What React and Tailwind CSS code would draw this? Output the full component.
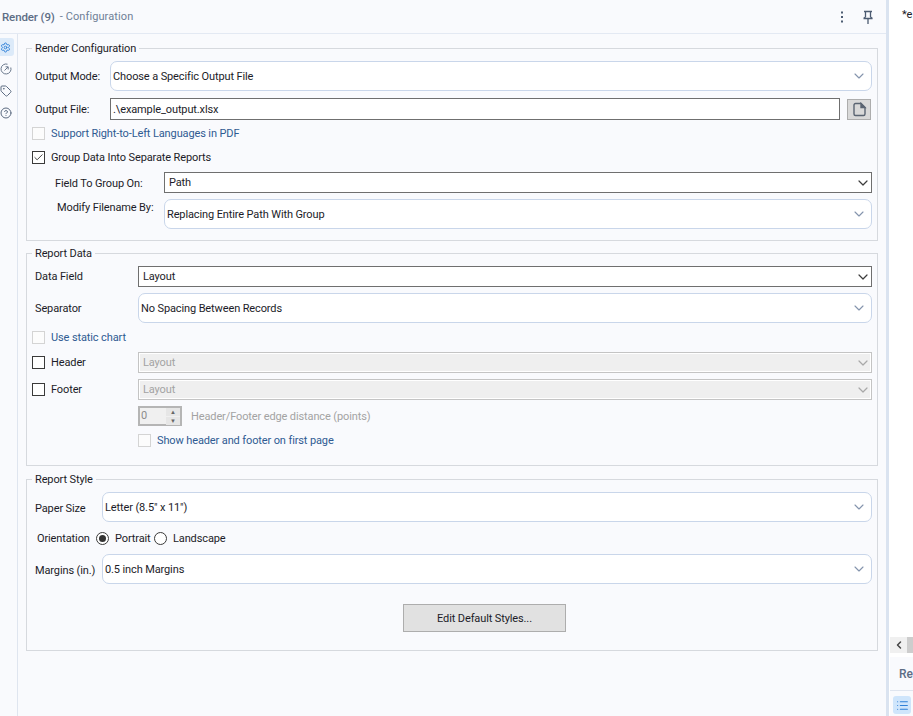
import { ChevronDown, ChevronLeft, Settings, Tag, CircleHelp, List, Check } from 'lucide-react'

const font = { fontFamily: '"Roboto", "Liberation Sans", sans-serif' }

// Roboto sits a little high next to the original font, so labels get a taller line box
const label = 'h-[16px] leading-[18px] text-[#1c1c28] whitespace-nowrap'
const lowLabel = 'h-[16px] leading-[20px] text-[#1c1c28] whitespace-nowrap'

function RoundSelect({ value }) {
  return (
    <div className="h-[30px] flex-1 flex items-center justify-between bg-white border border-[#c9d6ea] rounded-[7px] pl-[2px] pr-[4px] text-[#1c1c28]">
      <span className="h-[16px] leading-[18px]">{value}</span>
      <ChevronDown size={16} strokeWidth={1.7} className="text-[#8494ad]" />
    </div>
  )
}

function BoxSelect({ value }) {
  return (
    <div className="h-[21px] flex-1 flex items-center justify-between bg-white border border-[#6f6f6f] pl-1 text-[#1c1c28]">
      <span>{value}</span>
      <ChevronDown size={16} strokeWidth={1.8} className="text-[#3c3c3c]" />
    </div>
  )
}

function DisabledSelect({ value }) {
  return (
    <div className="h-[21px] flex-1 flex items-center justify-between bg-[#efefef] border border-[#c4c4c4] outline outline-1 -outline-offset-2 outline-white pl-1 text-[#a3a3a3]">
      <span>{value}</span>
      <ChevronDown size={16} strokeWidth={1.8} className="text-[#a8a8a8]" />
    </div>
  )
}

function CheckRow({ text, checked, disabled, blue, flat, className = '' }) {
  const box = disabled ? 'border-[#d4d4d4] bg-[#fcfcfc]' : 'border-[#3a3a3a] bg-white'
  return (
    <div className={`flex items-center ${className}`}>
      <div className={`w-[13px] h-[13px] border flex items-center justify-center ${box}`}>
        {checked && <Check size={11} strokeWidth={2} className="text-[#333]" />}
      </div>
      <span className={`ml-[6px] h-[16px] ${flat ? 'leading-[16px]' : 'leading-[18px]'} ${blue ? 'text-[#2f5a92]' : 'text-[#1c1c28]'}`}>{text}</span>
    </div>
  )
}

function Group({ title, className = '', children }) {
  return (
    <fieldset className={`border border-[#d6d9de] mx-[8px] pl-[8px] pr-[5px] ${className}`}>
      <legend className="-ml-[3px] px-[3px] h-[12px] leading-[14px] text-[#1c1c28]">{title}</legend>
      {children}
    </fieldset>
  )
}

function Radio({ text, checked, className = '' }) {
  return (
    <div className={`flex items-center ${className}`}>
      <div className="w-[13px] h-[13px] rounded-full border border-[#3a3a3a] bg-white flex items-center justify-center">
        {checked && <div className="w-[7px] h-[7px] rounded-full bg-[#333]" />}
      </div>
      <span className="ml-[6px] h-[16px] leading-[18px] text-[#1c1c28]">{text}</span>
    </div>
  )
}

function FileIcon() {
  return (
    <svg width="15" height="15" viewBox="0 0 15 15" fill="none" stroke="#5a6472" strokeWidth="1.4">
      <path d="M2 3a1.5 1.5 0 0 1 1.5-1.5H9l4 4v6.5a1.5 1.5 0 0 1-1.5 1.5h-8A1.5 1.5 0 0 1 2 12z" />
      <path d="M9 1.5l4 4H9z" fill="#5a6472" />
    </svg>
  )
}

function PinIcon() {
  return (
    <svg width="14" height="14" viewBox="0 0 14 14" fill="none" stroke="#4d5c72" strokeWidth="1.3">
      <path d="M3 1.5h8M4.5 1.5v5.5M9.500 1.5v5.500M2.500 8.500h9M4.500 7l-2 1.500M9.500 7l2 1.500M7 8.500V14" />
    </svg>
  )
}

function DotsIcon() {
  return (
    <svg width="4" height="12" viewBox="0 0 4 12" fill="#4d5c72">
      <rect x="1" y="0.500" width="2" height="2" />
      <rect x="1" y="5" width="2" height="2" />
      <rect x="1" y="9.500" width="2" height="2" />
    </svg>
  )
}

function OutputIcon() {
  return (
    <svg width="12" height="12" viewBox="0 0 12 12" fill="none" stroke="#6a788c" strokeWidth="1">
      <path d="M7.500 1.200a5 5 0 1 0 3.300 3.300" />
      <path d="M4.500 7.500L8 4M5.500 3.800h2.700v2.700" />
    </svg>
  )
}

function SideTab({ children, active }) {
  return (
    <div className={`w-[14px] h-[18px] flex items-center ${active ? 'rounded-r-[3px] bg-[#dceaf9]' : ''}`}>
      {children}
    </div>
  )
}

export default function App() {
  return (
    <div style={font} className="w-[913px] h-[716px] overflow-hidden flex bg-white text-[11px] leading-[16px] tracking-[-0.12px]">
      <div className="w-[886px] h-full flex flex-col bg-[#f9fafd]">
        <div className="h-[34px] flex items-center justify-between border-b border-[#e3e9f3] pl-[2px] pr-[11px]">
          <div className="flex items-center">
            <span className="font-medium text-[#5d6d85] text-[11.5px]">Render (9)</span>
            <span className="ml-[5px] text-[#6f7f97] text-[11px] tracking-[0.1px]">- Configuration</span>
          </div>
          <div className="flex items-center gap-[17px]">
            <DotsIcon />
            <PinIcon />
          </div>
        </div>

        <div className="flex-1 flex min-h-0">
          <div className="w-[18px] border-r border-[#dfe5ef] flex flex-col items-start pt-[4px] gap-[4px]">
            <SideTab active><Settings size={11} className="text-[#2f80d8]" /></SideTab>
            <SideTab><OutputIcon /></SideTab>
            <SideTab><Tag size={12} className="text-[#5b6a80]" /></SideTab>
            <SideTab><CircleHelp size={12} className="text-[#5b6a80]" /></SideTab>
          </div>

          <div className="flex-1 pt-[8px]">
            <Group title="Render Configuration" className="h-[199px]">
              <div className="flex items-center mt-[7px]">
                <span className={`w-[75px] ${label}`}>Output Mode:</span>
                <RoundSelect value="Choose a Specific Output File" />
              </div>
              <div className="flex items-center mt-[7px]">
                <span className={`w-[75px] ${label}`}>Output File:</span>
                <div className="flex-1 h-[22px] bg-white border border-[#6f6f6f] pl-[2px] flex items-center text-[#1c1c28]">
                  <span className="h-[16px] leading-[18px]">.\example_output.xlsx</span>
                </div>
                <div className="ml-[7px] mr-[1px] w-[24px] h-[21px] bg-[#d9d9d9] border border-[#adadad] flex items-center justify-center"><FileIcon /></div>
              </div>
              <CheckRow text="Support Right-to-Left Languages in PDF" disabled blue className="mt-[5px] -ml-[3px]" />
              <CheckRow text="Group Data Into Separate Reports" checked className="mt-[8px] -ml-[3px]" />
              <div className="flex items-center mt-[7px]">
                <span className={`w-[129px] pl-[20px] ${label}`}>Field To Group On:</span>
                <BoxSelect value="Path" />
              </div>
              <div className="flex items-start mt-[6px]">
                <span className={`w-[129px] pl-[22px] ${label}`}>Modify Filename By:</span>
                <RoundSelect value="Replacing Entire Path With Group" />
              </div>
            </Group>

            <Group title="Report Data" className="h-[219px] mt-[6px]">
              <div className="flex items-center mt-[7px]">
                <span className="w-[103px] text-[#1c1c28]">Data Field</span>
                <BoxSelect value="Layout" />
              </div>
              <div className="flex items-center mt-[6px]">
                <span className={`w-[103px] ${label}`}>Separator</span>
                <RoundSelect value="No Spacing Between Records" />
              </div>
              <CheckRow text="Use static chart" disabled blue className="mt-[6px] -ml-[3px]" />
              <div className="flex items-center mt-[7px] -ml-[3px]">
                <CheckRow text="Header" flat className="w-[106px]" />
                <DisabledSelect value="Layout" />
              </div>
              <div className="flex items-center mt-[6px] -ml-[3px]">
                <CheckRow text="Footer" flat className="w-[106px]" />
                <DisabledSelect value="Layout" />
              </div>
              <div className="flex items-center mt-[6px] pl-[103px]">
                <div className="w-[44px] h-[20px] border-2 border-[#b5b5b5] bg-[#f0f0f0] flex items-center justify-between text-[#8c8c8c]">
                  <span className="pl-px">0</span>
                  <div className="w-[14px] h-full flex flex-col gap-px text-[6px] leading-[8px] text-[#666] text-center">
                    <span className="flex-1 bg-[#e6e6e6]">▲</span>
                    <span className="flex-1 bg-[#e6e6e6]">▼</span>
                  </div>
                </div>
                <span className="ml-[9px] h-[16px] leading-[18px] text-[#a3a3a3]">Header/Footer edge distance (points)</span>
              </div>
              <CheckRow text="Show header and footer on first page" disabled blue className="mt-[6px] ml-[103px]" />
            </Group>

            <Group title="Report Style" className="h-[178px] mt-[7px]">
              <div className="flex items-center mt-[7px]">
                <span className={`w-[67px] ${lowLabel}`}>Paper Size</span>
                <RoundSelect value="Letter (8.5&quot; x 11&quot;)" />
              </div>
              <div className="flex items-center mt-[8px] pl-[2px]">
                <span className={`w-[59px] ${label}`}>Orientation</span>
                <Radio text="Portrait" checked className="w-[58px]" />
                <Radio text="Landscape" />
              </div>
              <div className="flex items-center mt-[8px]">
                <span className={`w-[67px] ${lowLabel}`}>Margins (in.)</span>
                <RoundSelect value="0.5 inch Margins" />
              </div>
              <div className="w-[163px] h-[28px] mt-[20px] ml-[368px] bg-[#e1e1e1] border border-[#adadad] flex items-center justify-center text-[#1c1c28]">
                <span className="h-[16px] leading-[18px]">Edit Default Styles...</span>
              </div>
            </Group>
          </div>
        </div>
      </div>

      <div className="w-[3px] h-full bg-[#dae3f0]" />

      <div className="flex-1 h-full flex flex-col min-w-0 overflow-hidden">
        <div className="h-[637px] pl-[13px] pt-[7px] text-[#1c1c28] whitespace-nowrap">*e</div>
        <div className="h-[16px] ml-[1px] flex bg-[#f0f0f0]">
          <div className="w-[17px] flex items-center justify-center"><ChevronLeft size={12} strokeWidth={3} className="text-[#444]" /></div>
          <div className="flex-1 bg-[#cdcdcd]" />
        </div>
        <div className="h-[4px]" />
        <div className="h-[34px] ml-[1px] flex items-center pl-[9px] bg-[#f9fafd] border-b border-[#dfe5ef] text-[12px] font-medium text-[#5d6d85] whitespace-nowrap">Re</div>
        <div className="flex-1 ml-[1px] pl-[3px] pt-[5px] bg-[#f9fafd]">
          <div className="w-[18px] h-[18px] rounded-[3px] bg-[#cfe5fb] flex items-center justify-center"><List size={13} className="text-[#2f80d8]" /></div>
        </div>
      </div>
    </div>
  )
}
